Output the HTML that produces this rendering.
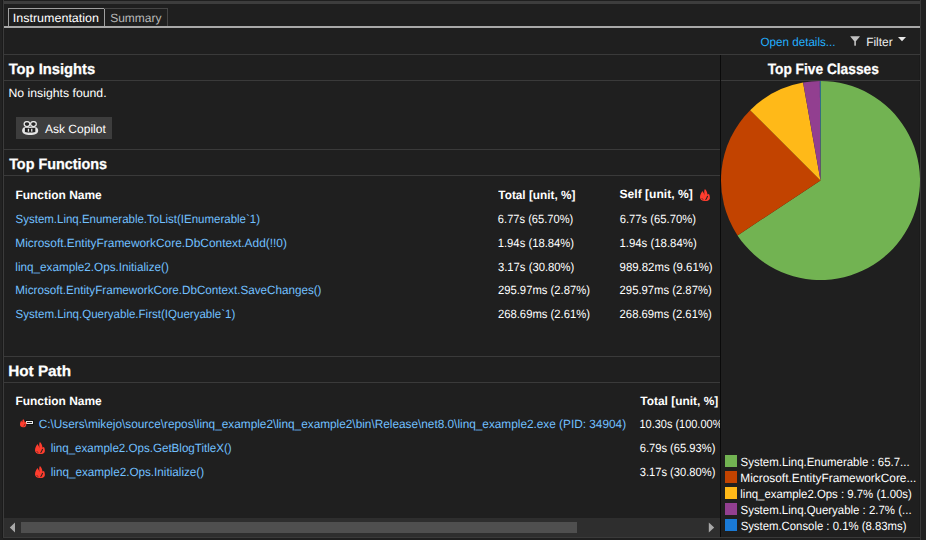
<!DOCTYPE html>
<html><head><meta charset="utf-8">
<style>
html,body{margin:0;padding:0;}
body{width:926px;height:540px;overflow:hidden;background:#1f1f1f;position:relative;font-family:"Liberation Sans",sans-serif;}
.a{position:absolute;}
.tw{position:absolute;left:0;width:0;height:0;transform-origin:0 0;}
.tx{position:absolute;white-space:nowrap;line-height:1;text-rendering:geometricPrecision;}
.hl{position:absolute;height:1px;background:#3a3a3a;}
#lp{position:absolute;left:0;top:0;width:720px;height:540px;overflow:hidden;}
#rp{position:absolute;left:721px;top:0;width:199px;height:540px;overflow:hidden;}
</style></head><body>
<!-- frame -->
<div class="a" style="left:0;top:0;width:3px;height:540px;background:#222222"></div>
<div class="a" style="left:2px;top:0;width:1px;height:538px;background:#1b1b1b"></div><div class="a" style="left:3px;top:0;width:1px;height:538px;background:#3b3b3b"></div>
<div class="a" style="left:4px;top:1px;width:916px;height:3px;background:#3d3d3d"></div>
<div class="a" style="left:919px;top:55px;width:1px;height:482px;background:#1b1b1b"></div><div class="a" style="left:920px;top:0;width:1px;height:540px;background:#3b3b3b"></div>
<div class="a" style="left:921px;top:0;width:5px;height:540px;background:#222222"></div>
<!-- tabs -->
<div class="a" style="left:8px;top:8px;width:95px;height:18px;border:1px solid #a0a0a0;border-bottom:none;background:#1f1f1f"></div>
<div class="a" style="left:104px;top:8px;width:63px;height:18px;border:1px solid #454545;border-bottom:none;border-left:none;"></div>
<div class="a" style="left:4px;top:26px;width:916px;height:2px;background:#a8a8a8"></div>
<div class="hl" style="left:4px;top:54px;width:916px"></div>
<!-- funnel -->
<svg class="a" style="left:849.5px;top:35.8px" width="11" height="11" viewBox="0 0 11 11"><path d="M0.2,0.2 L10,0.2 C8.5,2.2 7,3.8 5.9,5.2 L5.9,9.4 Q5.1,10.3 4.3,9.4 L4.3,5.2 C3.2,3.8 1.7,2.2 0.2,0.2 Z" fill="#c2c2c2"/></svg>
<svg class="a" style="left:898px;top:37px" width="8" height="5" viewBox="0 0 8 5"><path d="M0,0.1 L8,0.1 L4,4.2 Z" fill="#e8e8e8"/></svg>
<!-- left panel lines -->
<div class="hl" style="left:4px;top:80px;width:916px"></div>
<div class="hl" style="left:4px;top:149px;width:716px"></div>
<div class="hl" style="left:4px;top:175px;width:716px"></div>
<div class="hl" style="left:4px;top:356px;width:716px"></div>
<div class="hl" style="left:4px;top:382px;width:716px"></div>
<div class="a" style="left:720px;top:55px;width:1px;height:482px;background:#0a0a0a"></div>
<!-- button -->
<div class="a" style="left:16px;top:117px;width:96px;height:22px;background:#3d3d3d"></div>
<svg class="a" style="left:22px;top:121px" width="17" height="15" viewBox="0 0 17 15">
<path d="M2.2,6.2 C0.7,6.8 0.1,8.2 0.1,9.8 C0.3,12.9 3.6,14 8.15,14 C12.7,14 16,12.9 16.2,9.8 C16.2,8.2 15.6,6.8 14.1,6.2 Z" fill="#e6e6e6"/>
<path d="M2.9,6.9 L13.3,6.9 L13.3,10.9 Q8.1,12.3 2.9,10.9 Z" fill="#222222"/>
<rect x="5.8" y="7.7" width="1.3" height="3" fill="#e6e6e6"/>
<rect x="9.1" y="7.7" width="1.3" height="3" fill="#e6e6e6"/>
<ellipse cx="5.0" cy="3.05" rx="2.85" ry="2.45" fill="#262626" stroke="#e6e6e6" stroke-width="1.25"/>
<ellipse cx="11.45" cy="3.05" rx="2.85" ry="2.45" fill="#262626" stroke="#e6e6e6" stroke-width="1.25"/>
<path d="M8.2,5.5 L8.2,7" stroke="#e6e6e6" stroke-width="1.2"/>
</svg>
<!-- flame header -->
<svg class="a" style="left:699.5px;top:189px" width="10" height="12" viewBox="0 0 10 12">
<path d="M4.9,0 C6.3,1.3 7.5,3.2 7.4,5.6 C8,5.4 8.6,5.2 9,5.1 C9.6,6.3 9.9,7.6 9.9,8.9 C9.9,10.9 8.2,12 5,12 C1.8,12 0,10.6 0,8.2 C0,5.8 1.2,3.7 2.4,1.9 C3.2,3.2 4.2,4.5 4.8,6.2 C4.0,3.8 4.0,1.6 4.9,0 Z" fill="#ff3d2e"/>
<path d="M5.6,10.8 C6.5,9.8 7.1,8.5 7.6,6.8" stroke="#1f1f1f" stroke-width="1.05" fill="none"/>
<path d="M1.9,9.3 L3.1,10.7" stroke="#1f1f1f" stroke-width="0.8" fill="none"/>
</svg>
<!-- hot path icons -->
<svg class="a" style="left:20px;top:419px" width="15" height="9" viewBox="0 0 15 9">
<rect x="5.5" y="1.5" width="8" height="4" fill="none" stroke="#000" stroke-opacity="0.45" stroke-width="1"/>
<rect x="6.5" y="2.5" width="6" height="2" fill="none" stroke="#e8e8e8" stroke-width="1"/>
<path d="M3,8.3 C1.2,8.3 0,7.3 0,5.6 C0,3.9 0.6,2.6 1.3,1.5 C1.5,2.3 1.9,2.8 2.3,3.2 C2.2,2 2.5,0.9 3.1,0 C4,0.9 4.7,2 4.8,3.4 C5.3,3.2 5.7,3 6,2.8 C6.5,4 6.3,4.9 6.3,5.7 C6.3,7.3 5,8.3 3,8.3 Z" fill="#ff3d2e"/>
<path d="M3.4,7.4 C4.3,6.6 4.8,5.8 5.1,4.8" stroke="#1f1f1f" stroke-width="0.6" fill="none"/>
</svg>
<svg class="a" style="left:34.5px;top:442px" width="10" height="12" viewBox="0 0 10 12">
<path d="M4.9,0 C6.3,1.3 7.5,3.2 7.4,5.6 C8,5.4 8.6,5.2 9,5.1 C9.6,6.3 9.9,7.6 9.9,8.9 C9.9,10.9 8.2,12 5,12 C1.8,12 0,10.6 0,8.2 C0,5.8 1.2,3.7 2.4,1.9 C3.2,3.2 4.2,4.5 4.8,6.2 C4.0,3.8 4.0,1.6 4.9,0 Z" fill="#ff3d2e"/>
<path d="M5.6,10.8 C6.5,9.8 7.1,8.5 7.6,6.8" stroke="#1f1f1f" stroke-width="1.05" fill="none"/>
<path d="M1.9,9.3 L3.1,10.7" stroke="#1f1f1f" stroke-width="0.8" fill="none"/>
</svg>
<svg class="a" style="left:34.5px;top:466px" width="10" height="12" viewBox="0 0 10 12">
<path d="M4.9,0 C6.3,1.3 7.5,3.2 7.4,5.6 C8,5.4 8.6,5.2 9,5.1 C9.6,6.3 9.9,7.6 9.9,8.9 C9.9,10.9 8.2,12 5,12 C1.8,12 0,10.6 0,8.2 C0,5.8 1.2,3.7 2.4,1.9 C3.2,3.2 4.2,4.5 4.8,6.2 C4.0,3.8 4.0,1.6 4.9,0 Z" fill="#ff3d2e"/>
<path d="M5.6,10.8 C6.5,9.8 7.1,8.5 7.6,6.8" stroke="#1f1f1f" stroke-width="1.05" fill="none"/>
<path d="M1.9,9.3 L3.1,10.7" stroke="#1f1f1f" stroke-width="0.8" fill="none"/>
</svg>
<!-- scrollbar -->
<div class="a" style="left:4px;top:518px;width:716px;height:19px;background:#2e2e2e"></div>
<div class="a" style="left:21px;top:522px;width:556px;height:11px;background:#4f4f4f"></div>
<svg class="a" style="left:9px;top:522px" width="7" height="11" viewBox="0 0 7 11"><path d="M6,0.6 L6,10.4 L0.8,5.5 Z" fill="#a8a8a8"/></svg>
<svg class="a" style="left:708px;top:522px" width="7" height="11" viewBox="0 0 7 11"><path d="M0.8,0.6 L0.8,10.4 L6.2,5.5 Z" fill="#a8a8a8"/></svg>
<div class="a" style="left:3px;top:537px;width:918px;height:1px;background:#3a3a3a"></div>
<!-- pie -->
<svg class="a" style="left:0;top:0" width="926" height="540" viewBox="0 0 926 540">
<path d="M820.5,180.5 L820.50,81.00 A99.5,99.5 0 1 1 737.51,235.39 Z" fill="#72b352"/>
<path d="M820.5,180.5 L737.51,235.39 A99.5,99.5 0 0 1 750.14,110.14 Z" fill="#c24300"/>
<path d="M820.5,180.5 L750.14,110.14 A99.5,99.5 0 0 1 803.09,82.54 Z" fill="#ffb918"/>
<path d="M820.5,180.5 L803.09,82.54 A99.5,99.5 0 0 1 819.87,81.00 Z" fill="#923f90"/>
<path d="M820.5,180.5 L819.87,81.00 A99.5,99.5 0 0 1 820.50,81.00 Z" fill="#1a7ad6"/>
<rect x="725" y="455" width="12" height="12" fill="#72b352"/>
<rect x="725" y="471" width="12" height="12" fill="#c24300"/>
<rect x="725" y="487" width="12" height="12" fill="#ffb918"/>
<rect x="725" y="503" width="12" height="12" fill="#923f90"/>
<rect x="725" y="519" width="12" height="12" fill="#1a7ad6"/>
</svg>
<!-- texts -->
<div id="lp">
<div class="tw" style="top:11.84px;transform:scaleX(1.0421)"><div class="tx" id="t0" style="left:12.267px;top:0;font-size:12px;color:#ffffff;">Instrumentation</div></div>
<div class="tw" style="top:11.84px;transform:scaleX(1.0004)"><div class="tx" id="t1" style="left:110.126px;top:0;font-size:12px;color:#b8b8b8;">Summary</div></div>
<div class="tw" style="top:61.65px;transform:scaleX(0.9811)"><div class="tx" id="t4" style="left:8.882px;top:0;font-size:15px;color:#ffffff;font-weight:bold;-webkit-text-stroke:0.25px currentColor;">Top Insights</div></div>
<div class="tw" style="top:86.84px;transform:scaleX(1.0214)"><div class="tx" id="t5" style="left:8.295px;top:0;font-size:12px;color:#ffffff;">No insights found.</div></div>
<div class="tw" style="top:122.84px;transform:scaleX(1.0043)"><div class="tx" id="t6" style="left:44.698px;top:0;font-size:12px;color:#ffffff;">Ask Copilot</div></div>
<div class="tw" style="top:156.65px;transform:scaleX(0.9585)"><div class="tx" id="t7" style="left:9.546px;top:0;font-size:15px;color:#ffffff;font-weight:bold;-webkit-text-stroke:0.25px currentColor;">Top Functions</div></div>
<div class="tw" style="top:188.84px;transform:scaleX(0.9956)"><div class="tx" id="t8" style="left:15.545px;top:0;font-size:12px;color:#ffffff;font-weight:bold;">Function Name</div></div>
<div class="tw" style="top:188.84px;transform:scaleX(0.9823)"><div class="tx" id="t9" style="left:507.358px;top:0;font-size:12px;color:#ffffff;font-weight:bold;">Total [unit, %]</div></div>
<div class="tw" style="top:187.84px;transform:scaleX(1.0057)"><div class="tx" id="t10" style="left:616.070px;top:0;font-size:12px;color:#ffffff;font-weight:bold;">Self [unit, %]</div></div>
<div class="tw" style="top:212.84px;transform:scaleX(0.9569)"><div class="tx" id="t11" style="left:16.274px;top:0;font-size:12px;color:#72c0ff;">System.Linq.Enumerable.ToList(IEnumerable`1)</div></div>
<div class="tw" style="top:212.84px;transform:scaleX(0.9263)"><div class="tx" id="t12" style="left:537.478px;top:0;font-size:12px;color:#ffffff;">6.77s (65.70%)</div></div>
<div class="tw" style="top:212.84px;transform:scaleX(0.9383)"><div class="tx" id="t13" style="left:660.426px;top:0;font-size:12px;color:#ffffff;">6.77s (65.70%)</div></div>
<div class="tw" style="top:236.84px;transform:scaleX(0.9912)"><div class="tx" id="t14" style="left:15.406px;top:0;font-size:12px;color:#72c0ff;">Microsoft.EntityFrameworkCore.DbContext.Add(!!0)</div></div>
<div class="tw" style="top:236.84px;transform:scaleX(0.9377)"><div class="tx" id="t15" style="left:530.811px;top:0;font-size:12px;color:#ffffff;">1.94s (18.84%)</div></div>
<div class="tw" style="top:236.84px;transform:scaleX(0.9503)"><div class="tx" id="t16" style="left:651.803px;top:0;font-size:12px;color:#ffffff;">1.94s (18.84%)</div></div>
<div class="tw" style="top:260.84px;transform:scaleX(0.9746)"><div class="tx" id="t17" style="left:15.769px;top:0;font-size:12px;color:#72c0ff;">linq_example2.Ops.Initialize()</div></div>
<div class="tw" style="top:260.84px;transform:scaleX(0.9385)"><div class="tx" id="t18" style="left:530.588px;top:0;font-size:12px;color:#ffffff;">3.17s (30.80%)</div></div>
<div class="tw" style="top:260.84px;transform:scaleX(0.9491)"><div class="tx" id="t19" style="left:652.830px;top:0;font-size:12px;color:#ffffff;">989.82ms (9.61%)</div></div>
<div class="tw" style="top:283.84px;transform:scaleX(0.9725)"><div class="tx" id="t20" style="left:15.811px;top:0;font-size:12px;color:#72c0ff;">Microsoft.EntityFrameworkCore.DbContext.SaveChanges()</div></div>
<div class="tw" style="top:283.84px;transform:scaleX(0.9389)"><div class="tx" id="t21" style="left:530.352px;top:0;font-size:12px;color:#ffffff;">295.97ms (2.87%)</div></div>
<div class="tw" style="top:283.84px;transform:scaleX(0.9390)"><div class="tx" id="t22" style="left:659.874px;top:0;font-size:12px;color:#ffffff;">295.97ms (2.87%)</div></div>
<div class="tw" style="top:307.84px;transform:scaleX(0.9605)"><div class="tx" id="t23" style="left:16.212px;top:0;font-size:12px;color:#72c0ff;">System.Linq.Queryable.First(IQueryable`1)</div></div>
<div class="tw" style="top:307.84px;transform:scaleX(0.9389)"><div class="tx" id="t24" style="left:530.352px;top:0;font-size:12px;color:#ffffff;">268.69ms (2.61%)</div></div>
<div class="tw" style="top:307.84px;transform:scaleX(0.9390)"><div class="tx" id="t25" style="left:659.874px;top:0;font-size:12px;color:#ffffff;">268.69ms (2.61%)</div></div>
<div class="tw" style="top:363.65px;transform:scaleX(1.0194)"><div class="tx" id="t26" style="left:8.021px;top:0;font-size:15px;color:#ffffff;font-weight:bold;-webkit-text-stroke:0.25px currentColor;">Hot Path</div></div>
<div class="tw" style="top:394.84px;transform:scaleX(0.9956)"><div class="tx" id="t27" style="left:15.545px;top:0;font-size:12px;color:#ffffff;font-weight:bold;">Function Name</div></div>
<div class="tw" style="top:394.84px;transform:scaleX(0.9952)"><div class="tx" id="t28" style="left:643.356px;top:0;font-size:12px;color:#ffffff;font-weight:bold;">Total [unit, %]</div></div>
<div class="tw" style="top:417.84px;transform:scaleX(0.9839)"><div class="tx" id="t29" style="left:39.328px;top:0;font-size:12px;color:#72c0ff;">C:\Users\mikejo\source\repos\linq_example2\linq_example2\bin\Release\net8.0\linq_example2.exe (PID: 34904)</div></div>
<div class="tw" style="top:417.84px;transform:scaleX(0.9143)"><div class="tx" id="t30" style="left:699.369px;top:0;font-size:12px;color:#ffffff;">10.30s (100.00%)</div></div>
<div class="tw" style="top:441.84px;transform:scaleX(0.9647)"><div class="tx" id="t31" style="left:52.502px;top:0;font-size:12px;color:#72c0ff;">linq_example2.Ops.GetBlogTitleX()</div></div>
<div class="tw" style="top:441.84px;transform:scaleX(0.9311)"><div class="tx" id="t32" style="left:687.029px;top:0;font-size:12px;color:#ffffff;">6.79s (65.93%)</div></div>
<div class="tw" style="top:465.84px;transform:scaleX(0.9746)"><div class="tx" id="t33" style="left:52.068px;top:0;font-size:12px;color:#72c0ff;">linq_example2.Ops.Initialize()</div></div>
<div class="tw" style="top:465.84px;transform:scaleX(0.9311)"><div class="tx" id="t34" style="left:687.012px;top:0;font-size:12px;color:#ffffff;">3.17s (30.80%)</div></div>
</div>
<div class="a" style="left:0;top:0;width:926px;height:540px;">
<div class="tw" style="top:35.84px;transform:scaleX(0.9690)"><div class="tx" id="t2" style="left:784.894px;top:0;font-size:12px;color:#22b0ff;">Open details...</div></div>
<div class="tw" style="top:35.84px;transform:scaleX(0.9944)"><div class="tx" id="t3" style="left:871.020px;top:0;font-size:12px;color:#f0f0f0;">Filter</div></div>
<div class="tw" style="top:61.65px;transform:scaleX(0.9152)"><div class="tx" id="t35" style="left:838.791px;top:0;font-size:15px;color:#ffffff;font-weight:bold;-webkit-text-stroke:0.25px currentColor;">Top Five Classes</div></div>
<div class="tw" style="top:455.84px;transform:scaleX(0.9526)"><div class="tx" id="t36" style="left:777.455px;top:0;font-size:12px;color:#ffffff;">System.Linq.Enumerable : 65.7...</div></div>
<div class="tw" style="top:471.84px;transform:scaleX(0.9887)"><div class="tx" id="t37" style="left:748.799px;top:0;font-size:12px;color:#ffffff;">Microsoft.EntityFrameworkCore...</div></div>
<div class="tw" style="top:487.84px;transform:scaleX(0.9489)"><div class="tx" id="t38" style="left:780.198px;top:0;font-size:12px;color:#ffffff;">linq_example2.Ops : 9.7% (1.00s)</div></div>
<div class="tw" style="top:503.84px;transform:scaleX(0.9531)"><div class="tx" id="t39" style="left:777.006px;top:0;font-size:12px;color:#ffffff;">System.Linq.Queryable : 2.7% (...</div></div>
<div class="tw" style="top:519.84px;transform:scaleX(0.9452)"><div class="tx" id="t40" style="left:783.586px;top:0;font-size:12px;color:#ffffff;">System.Console : 0.1% (8.83ms)</div></div>
</div>
</body></html>
